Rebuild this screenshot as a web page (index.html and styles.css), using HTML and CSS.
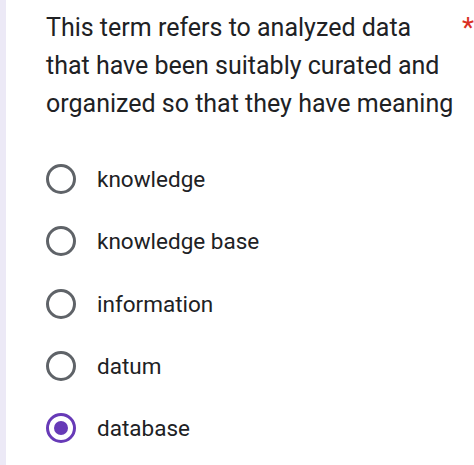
FILE: index.html
```html
<!DOCTYPE html>
<html>
<head>
  <meta charset="UTF-8">
  <title>Question</title>
  <link rel="stylesheet" href="styles.css">
</head>
<body>
  <div class="card">
    <div class="question">
      <div class="question-text">This term refers to analyzed data that have been suitably curated and organized so that they have meaning</div>
      <span class="required">*</span>
    </div>

    <div class="options">
      <label class="option">
        <span class="radio"></span>
        <span class="option-label">knowledge</span>
      </label>
      <label class="option">
        <span class="radio"></span>
        <span class="option-label">knowledge base</span>
      </label>
      <label class="option">
        <span class="radio"></span>
        <span class="option-label">information</span>
      </label>
      <label class="option">
        <span class="radio"></span>
        <span class="option-label">datum</span>
      </label>
      <label class="option">
        <span class="radio checked"></span>
        <span class="option-label">database</span>
      </label>
    </div>
  </div>
</body>
</html>
```

FILE: styles.css
```css
* {
  margin: 0;
  padding: 0;
  box-sizing: border-box;
}

body {
  width: 474px;
  height: 465px;
  overflow: hidden;
  background: #ffffff;
  font-family: Roboto, "Noto Sans", sans-serif;
  color: #202124;
}

.card {
  height: 100%;
  border-left: 6px solid #ece9f6;
  padding: 9px 0 0 40px;
}

.question {
  display: flex;
  align-items: flex-start;
}

.question-text {
  width: 410px;
  font-size: 25px;
  line-height: 38px;
}

.required {
  margin-left: 7px;
  color: #d93025;
  font-size: 28px;
  line-height: 38px;
}

.options {
  margin-top: 25px;
  display: flex;
  flex-direction: column;
}

.option {
  height: 62.3px;
  display: flex;
  align-items: center;
  gap: 21px;
}

.radio {
  width: 30px;
  height: 30px;
  border: 3px solid #5f6368;
  border-radius: 50%;
  display: flex;
  align-items: center;
  justify-content: center;
}

.radio.checked {
  border-color: #673ab7;
}

.radio.checked::after {
  content: '';
  width: 14px;
  height: 14px;
  border-radius: 50%;
  background: #673ab7;
}

.option-label {
  font-size: 22.5px;
}
```
